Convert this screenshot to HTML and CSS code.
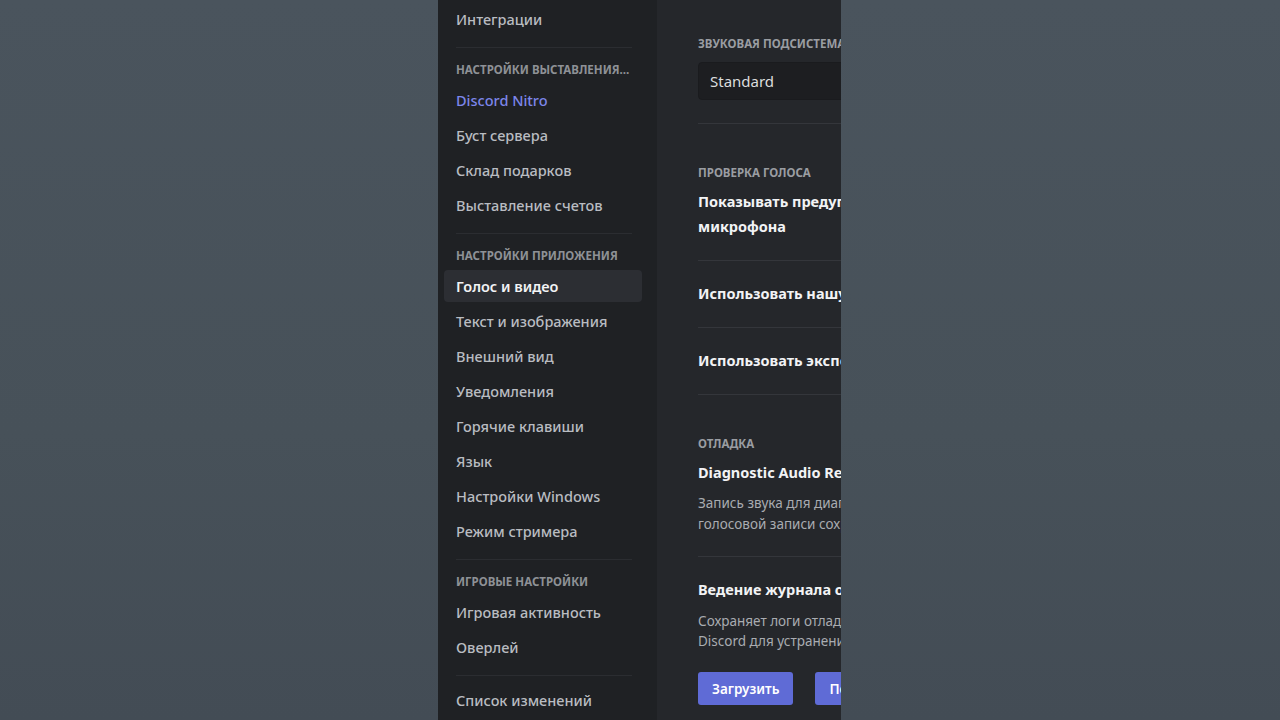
FILE: index.html
```html
<!DOCTYPE html>
<html lang="ru">
<head>
    <meta charset="UTF-8">
    <meta name="viewport" content="width=device-width, initial-scale=1">
    <title>Настройки пользователя - Голос и видео</title>
    <link rel="stylesheet" href="styles.css">
</head>
<body>
    <div class="app">
        <!-- Side menu -->
        <nav class="sidebar">
            <div class="item">Интеграции</div>
            <div class="separator"></div>

            <div class="header">Настройки выставления счетов</div>
            <div class="item nitro">Discord Nitro</div>
            <div class="item">Буст сервера</div>
            <div class="item">Склад подарков</div>
            <div class="item">Выставление счетов</div>
            <div class="separator"></div>

            <div class="header">Настройки приложения</div>
            <div class="item selected">Голос и видео</div>
            <div class="item">Текст и изображения</div>
            <div class="item">Внешний вид</div>
            <div class="item">Уведомления</div>
            <div class="item">Горячие клавиши</div>
            <div class="item">Язык</div>
            <div class="item">Настройки Windows</div>
            <div class="item">Режим стримера</div>
            <div class="separator"></div>

            <div class="header">Игровые настройки</div>
            <div class="item">Игровая активность</div>
            <div class="item">Оверлей</div>
            <div class="separator"></div>

            <div class="item">Список изменений</div>
        </nav>

        <!-- Settings content -->
        <main class="content">
            <div class="inner">
                <h5 class="label">Звуковая подсистема</h5>
                <div class="select">Standard</div>
                <div class="divider wide"></div>

                <h5 class="label label-gap">Проверка голоса</h5>
                <div class="title">Показывать предупреждение, если Discord не обнаруживает звук с вашего<br>микрофона</div>

                <div class="row">
                    <div class="title">Использовать нашу новейшую технологию для захвата экрана</div>
                </div>
                <div class="row">
                    <div class="title">Использовать экспериментальный метод захвата звука из приложений</div>
                </div>
                <div class="divider"></div>

                <h5 class="label label-gap">Отладка</h5>
                <div class="title">Diagnostic Audio Recording</div>
                <div class="note">Запись звука для диагностики проблем. Последние 5 минут<br>голосовой записи сохраняются в папку модуля голосовой связи.</div>

                <div class="row">
                    <div class="title">Ведение журнала отладки модуля голосовой связи</div>
                    <div class="note tight">Сохраняет логи отладки модуля голосовой связи в папке<br>Discord для устранения неполадок.</div>
                </div>

                <div class="buttons">
                    <button class="btn">Загрузить</button>
                    <button class="btn">Показать папку</button>
                </div>
            </div>
        </main>
    </div>
</body>
</html>
```

FILE: styles.css
```css
body {
    margin: 0;
    padding: 0;
    width: 100vw;
    height: 100vh;
    overflow: hidden;
    font-family: "Noto Sans", "Open Sans", sans-serif;
    background: linear-gradient(180deg, #4a545d 0%, #475159 60%, #434c55 100%);
}

.app {
    width: 403px;
    height: 720px;
    margin-left: 438px;
    display: flex;
    overflow: hidden;
}

/* Side menu */
.sidebar {
    width: 219px;
    flex-shrink: 0;
    box-sizing: border-box;
    padding: 3px 15px 0 6px;
    display: flex;
    flex-direction: column;
    background-color: #1f2124;
}

.item {
    flex-shrink: 0;
    height: 32px;
    line-height: 32px;
    padding: 0 12px;
    margin-bottom: 3px;
    border-radius: 4px;
    font-size: 14.5px;
    font-weight: 500;
    color: #b9bcc1;
    white-space: nowrap;
}

.item.nitro {
    color: #7c86ea;
}

.item.selected {
    background-color: #2c2e33;
    color: #f2f3f5;
    font-weight: 600;
}

.separator {
    flex-shrink: 0;
    height: 1px;
    margin: 9px 10px 8px 12px;
    background-color: #2b2d31;
}

.header {
    flex-shrink: 0;
    height: 24px;
    line-height: 24px;
    padding: 2px 10px 0 12px;
    margin-bottom: 2px;
    font-size: 11.5px;
    font-weight: 700;
    text-transform: uppercase;
    color: #8e9196;
    white-space: nowrap;
    overflow: hidden;
    text-overflow: ellipsis;
}

/* Settings content */
.content {
    flex: 1;
    overflow: hidden;
    background-color: #25272b;
}

.inner {
    width: 700px;
    padding: 36px 0 0 41px;
}

.label {
    margin: 0 0 10px;
    height: 16px;
    line-height: 16px;
    font-size: 11.5px;
    font-weight: 700;
    text-transform: uppercase;
    color: #9a9da2;
    white-space: nowrap;
}

.label-gap {
    margin-top: 41px;
    margin-bottom: 8px;
}

.select {
    height: 38px;
    line-height: 37px;
    box-sizing: border-box;
    padding-left: 11px;
    background-color: #1d1e21;
    border: 1px solid #1a1b1e;
    border-radius: 4px;
    font-size: 15px;
    color: #dcddde;
}

.divider {
    height: 1px;
    background-color: #34363b;
    margin-top: 21px;
}

.divider.wide {
    margin-top: 23px;
}

.title {
    font-size: 14.5px;
    line-height: 25px;
    font-weight: 700;
    color: #f2f3f5;
    white-space: nowrap;
}

.row {
    border-top: 1px solid #34363b;
    margin-top: 21px;
    padding-top: 20px;
}

.note {
    margin-top: 8px;
    font-size: 13.5px;
    line-height: 21px;
    color: #a9acb1;
    white-space: nowrap;
}

.note.tight {
    margin-top: 9px;
    line-height: 20px;
}

.buttons {
    display: flex;
    gap: 22px;
    margin-top: 21px;
}

.btn {
    height: 33px;
    padding: 0 14px;
    border: none;
    border-radius: 3px;
    background-color: #5f6bd6;
    color: #ffffff;
    font-family: inherit;
    font-size: 13.5px;
    font-weight: 600;
}
```
